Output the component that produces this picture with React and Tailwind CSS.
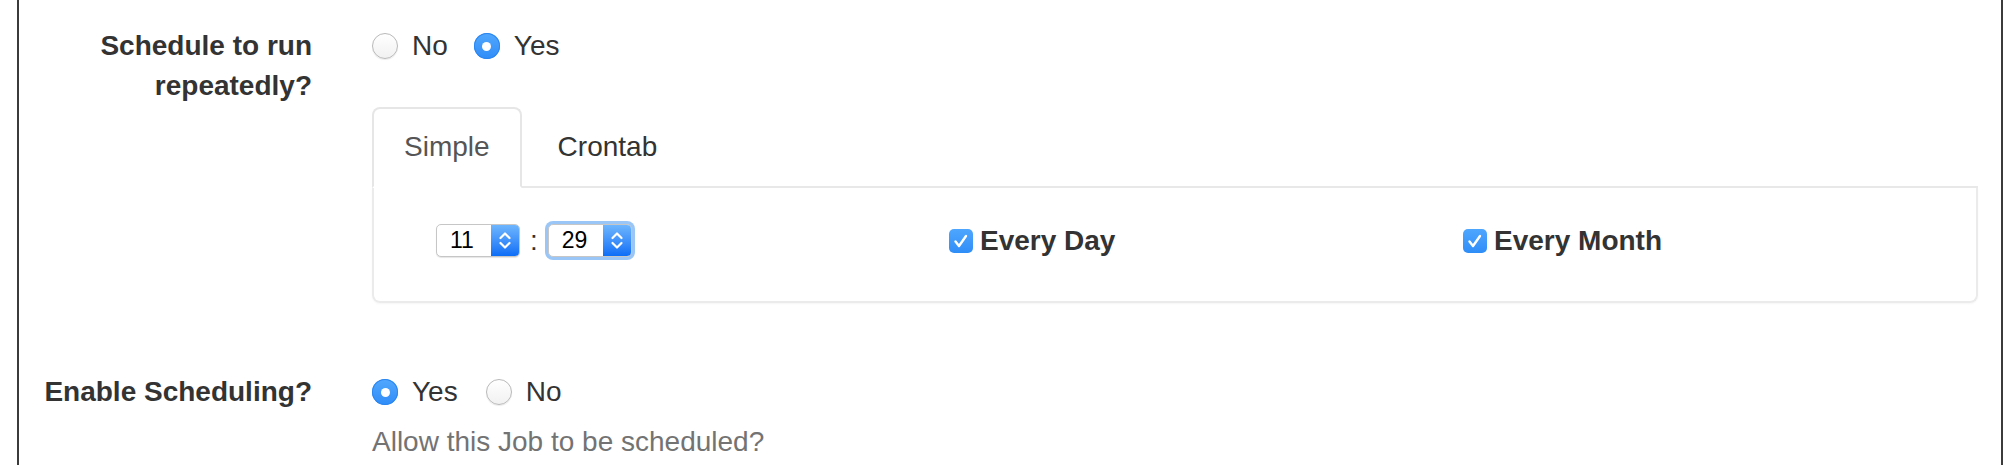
import { useState } from 'react'

function Radio({ checked, label, onClick, className = '' }) {
  return (
    <label onClick={onClick} className={`flex items-center cursor-pointer ${className}`}>
      {checked ? (
        <span className="w-[26px] h-[26px] rounded-full bg-gradient-to-b from-[#52a8fd] to-[#2f8cf8] flex items-center justify-center shadow-[inset_0_0_0_1px_#2b86ef]">
          <span className="w-[9px] h-[9px] rounded-full bg-white" />
        </span>
      ) : (
        <span className="w-[26px] h-[26px] rounded-full bg-gradient-to-b from-white to-[#f1f1f1] border border-[#b9b9b9] shadow-[0_1px_1px_rgba(0,0,0,0.08)]" />
      )}
      <span className="ml-[14px]">{label}</span>
    </label>
  )
}

function Stepper({ value, focused }) {
  return (
    <div className={`flex h-[33px] w-[84px] rounded-[5px] border border-[#c6c6c6] bg-white overflow-hidden ${focused ? 'shadow-[0_0_0_3px_#9ac6f7]' : 'shadow-[0_1px_1px_rgba(0,0,0,0.1)]'}`}>
      <span className="flex-1 pl-[13px] text-[23px] leading-[31px] text-black">{value}</span>
      <span className="w-[28px] bg-gradient-to-b from-[#6db5fd] to-[#0a6df6] flex items-center justify-center">
        <svg width="28" height="31" viewBox="0 0 28 31" fill="none" stroke="white" strokeWidth="2.2" strokeLinecap="round" strokeLinejoin="round">
          <path d="M9.5 13 L14 8.5 L18.5 13" />
          <path d="M9.5 18 L14 22.5 L18.5 18" />
        </svg>
      </span>
    </div>
  )
}

function Check({ label }) {
  return (
    <label className="flex items-center font-bold">
      <span className="w-[24px] h-[24px] rounded-[5px] bg-gradient-to-b from-[#4ea6fd] to-[#2f8df8] flex items-center justify-center">
        <svg width="24" height="24" viewBox="0 0 24 24" fill="none" stroke="white" strokeWidth="2.4" strokeLinecap="round" strokeLinejoin="round">
          <path d="M6.5 12.5 L10 17 L17 7" />
        </svg>
      </span>
      <span className="ml-[7px]">{label}</span>
    </label>
  )
}

export default function App() {
  const [repeat, setRepeat] = useState(true)
  const [enabled, setEnabled] = useState(true)
  const [tab, setTab] = useState('simple')

  return (
    <div className="h-[465px] bg-white font-['Liberation_Sans',Arial,sans-serif] text-[28px] leading-[40px] text-[#333] overflow-hidden">
      <div className="ml-[17px] w-[1986px] h-[465px] border-x-2 border-[#3b3b3b]">
        {/* schedule repeatedly */}
        <div className="flex pt-[26px]">
          <div className="w-[293px] text-right font-bold">Schedule to run<br />repeatedly?</div>
          <div className="ml-[60px] flex-1 pr-[23px]">
            <div className="flex items-center h-[40px]">
              <Radio checked={!repeat} label="No" onClick={() => setRepeat(false)} />
              <Radio checked={repeat} label="Yes" onClick={() => setRepeat(true)} className="ml-[26px]" />
            </div>

            <div className="mt-[41px] flex border-b-2 border-[#e8e8e8]">
              <button onClick={() => setTab('simple')}
                className={`-mb-[2px] px-[30px] pt-[18px] pb-[19px] border-2 rounded-t-[8px] ${tab === 'simple' ? 'border-[#e6e6e6] border-b-white bg-white text-[#555]' : 'border-transparent text-[#333]'}`}>
                Simple
              </button>
              <button onClick={() => setTab('crontab')}
                className={`-mb-[2px] ml-[4px] px-[30px] pt-[18px] pb-[19px] border-2 rounded-t-[8px] ${tab === 'crontab' ? 'border-[#e6e6e6] border-b-white bg-white text-[#555]' : 'border-transparent text-[#333]'}`}>
                Crontab
              </button>
            </div>
            <div className="h-[115px] border-2 border-t-0 border-[#ebebeb] rounded-b-[8px] shadow-[0_1px_2px_rgba(0,0,0,0.04)] flex items-center pl-[62px] pb-[8px]">
              <div className="w-[513px] flex items-center">
                <Stepper value="11" />
                <span className="mx-[10px]">:</span>
                <Stepper value="29" focused />
              </div>
              <div className="w-[514px]">
                <Check label="Every Day" />
              </div>
              <Check label="Every Month" />
            </div>
          </div>
        </div>

        {/* enable scheduling */}
        <div className="flex mt-[69px]">
          <div className="w-[293px] text-right font-bold">Enable Scheduling?</div>
          <div className="ml-[60px] flex-1">
            <div className="flex items-center h-[40px]">
              <Radio checked={enabled} label="Yes" onClick={() => setEnabled(true)} />
              <Radio checked={!enabled} label="No" onClick={() => setEnabled(false)} className="ml-[28px]" />
            </div>
            <div className="mt-[10px] text-[#737373]">Allow this Job to be scheduled?</div>
          </div>
        </div>
      </div>
    </div>
  )
}
